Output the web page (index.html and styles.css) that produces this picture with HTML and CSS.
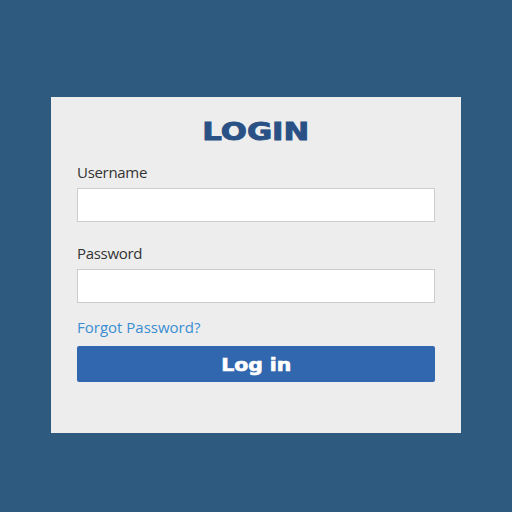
FILE: index.html
```html
<!DOCTYPE html>
<html>
<head>
<meta charset="utf-8">
<link rel="stylesheet" href="styles.css">
</head>
<body>
<div class="card">
  <h1 class="title"><span>LOGIN</span></h1>
  <label class="label" for="u">Username</label>
  <input class="field" id="u" type="text">
  <label class="label pw" for="p">Password</label>
  <input class="field" id="p" type="password">
  <a class="forgot" href="#">Forgot Password?</a>
  <button class="btn"><span>Log in</span></button>
</div>
</body>
</html>
```
FILE: styles.css
```css
html, body {
  margin: 0;
  padding: 0;
  background: #2e5a80;
  height: 100%;
}
body {
  padding-top: 97px;
  box-sizing: border-box;
  font-family: "Open Sans", "Noto Sans", sans-serif;
}
.card {
  width: 410px;
  height: 336px;
  margin: 0 auto;
  background: #ededed;
  padding: 0 26px;
  box-sizing: border-box;
  display: flex;
  flex-direction: column;
}
.title {
  margin: 20px 0 0;
  text-align: center;
  font-family: "DejaVu Sans", sans-serif;
  font-weight: bold;
  font-size: 24px;
  line-height: 30px;
  color: #2a5185;
}
.title span {
  display: inline-block;
  transform: scaleX(1.28);
  -webkit-text-stroke: 0.9px #2a5185;
}
.label {
  margin-top: 15px;
  font-size: 15px;
  line-height: 20px;
  color: #333;
  letter-spacing: -0.3px;
}
.label.pw {
  margin-top: 21px;
}
.field {
  margin-top: 6px;
  height: 34px;
  box-sizing: border-box;
  border: 1px solid #cccccc;
  background: #fff;
  outline: none;
  padding: 0 8px;
  border-radius: 0;
}
.forgot {
  margin-top: 14px;
  font-size: 15px;
  line-height: 20px;
  color: #3a8dd3;
  text-decoration: none;
  align-self: flex-start;
}
.btn {
  margin-top: 9px;
  height: 36px;
  border: none;
  border-radius: 2px;
  background: #3167ae;
  color: #fff;
  font-family: "DejaVu Sans", sans-serif;
  font-weight: bold;
  font-size: 17px;
  padding: 2px 0 0;
}
.btn span {
  display: inline-block;
  transform: scaleX(1.2);
  -webkit-text-stroke: 0.6px #fff;
}
```
